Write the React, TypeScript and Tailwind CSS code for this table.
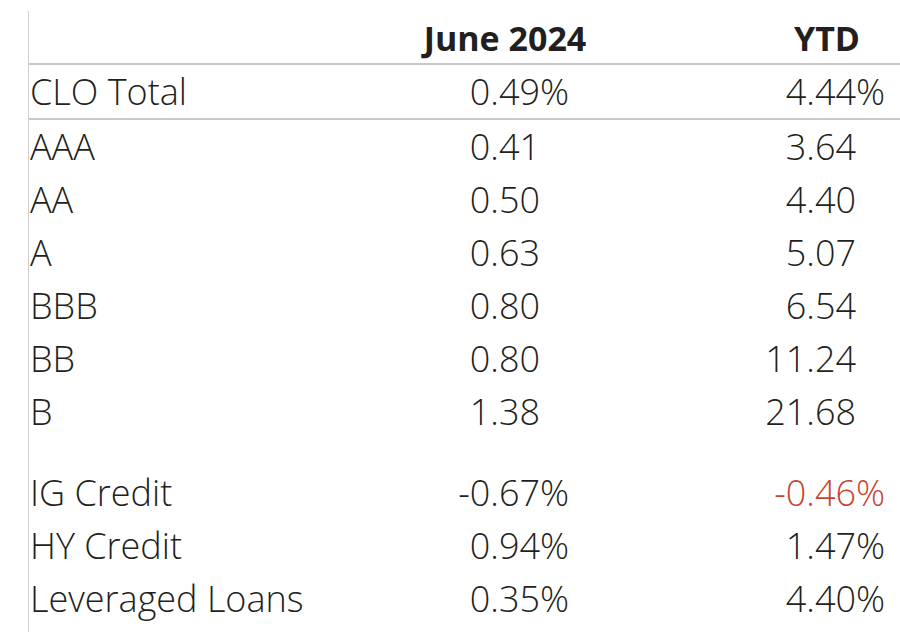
import React from 'react';

type Row = {
  label: string;
  june: string;
  ytd: string;
  pct?: boolean;
  ytdRed?: boolean;
};

const ratings: Row[] = [
  { label: 'AAA', june: '0.41', ytd: '3.64' },
  { label: 'AA', june: '0.50', ytd: '4.40' },
  { label: 'A', june: '0.63', ytd: '5.07' },
  { label: 'BBB', june: '0.80', ytd: '6.54' },
  { label: 'BB', june: '0.80', ytd: '11.24' },
  { label: 'B', june: '1.38', ytd: '21.68' },
];

const credit: Row[] = [
  { label: 'IG Credit', june: '-0.67', ytd: '-0.46', pct: true, ytdRed: true },
  { label: 'HY Credit', june: '0.94', ytd: '1.47', pct: true },
  { label: 'Leveraged Loans', june: '0.35', ytd: '4.40', pct: true },
];

// numbers sit right-aligned in a fixed box, the "%" hangs after it,
// so the decimal points line up down each column
function DataRow({ label, june, ytd, pct, ytdRed }: Row) {
  return (
    <div className="flex h-[53px] items-center leading-[53px]">
      <div className="w-[390px] pl-[1px]">{label}</div>
      <div className="w-[121px] text-right">{june}</div>
      <div className="w-[35px]">{pct ? '%' : ''}</div>
      <div className="w-[163px]" />
      <div className={`w-[118px] text-right ${ytdRed ? 'text-[#c8432f]' : ''}`}>{ytd}</div>
      <div className={`w-[33px] ${ytdRed ? 'text-[#c8432f]' : ''}`}>{pct ? '%' : ''}</div>
    </div>
  );
}

export default function App() {
  return (
    <div
      className="h-[641px] w-[900px] overflow-hidden bg-white pt-[11px] text-[36px] font-light text-[#231f20]"
      style={{ fontFamily: '"Open Sans", "Noto Sans", sans-serif' }}
    >
      <div className="ml-[28px] flex h-[621px] flex-col border-l border-[#cfcfcf]">
        <div className="flex h-[52px] items-center pt-[2px] text-[34px] font-bold leading-[52px]">
          <div className="w-[391px]" />
          <div className="w-[170px] text-center">June 2024</div>
          <div className="w-[170px]" />
          <div className="w-[134px] text-center">YTD</div>
        </div>
        <div className="h-[2px] bg-[#c8c8c8]" />
        <DataRow label="CLO Total" june="0.49" ytd="4.44" pct />
        <div className="h-[2px] bg-[#c8c8c8]" />
        {ratings.map((r) => (
          <DataRow key={r.label} {...r} />
        ))}
        <div className="h-[28px]" />
        {credit.map((r) => (
          <DataRow key={r.label} {...r} />
        ))}
      </div>
    </div>
  );
}
